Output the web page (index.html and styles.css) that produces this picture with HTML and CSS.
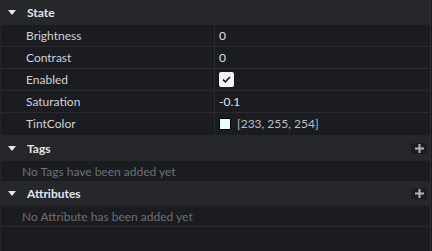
FILE: index.html
```html
<!DOCTYPE html>
<html>
<head>
<meta charset="utf-8">
<link rel="stylesheet" href="styles.css">
</head>
<body>
<div class="panel">
  <div class="section-head">
    <svg class="caret" width="8" height="5" viewBox="0 0 8 5"><path d="M0 0H8L4 5Z" fill="#e6e6e6"/></svg>
    <span class="title">State</span>
  </div>
  <div class="row"><div class="label">Brightness</div><div class="value">0</div></div>
  <div class="row"><div class="label">Contrast</div><div class="value">0</div></div>
  <div class="row"><div class="label">Enabled</div><div class="value"><span class="check"><svg width="9" height="7" viewBox="0 0 9 7"><path d="M1 3.6L3.3 5.8L8 1" fill="none" stroke="#1b1c20" stroke-width="1.6"/></svg></span></div></div>
  <div class="row"><div class="label">Saturation</div><div class="value">-0.1</div></div>
  <div class="row last"><div class="label">TintColor</div><div class="value"><span class="swatch"></span><span class="rgb">[233, 255, 254]</span></div></div>

  <div class="section-head sec2">
    <svg class="caret" width="8" height="5" viewBox="0 0 8 5"><path d="M0 0H8L4 5Z" fill="#e6e6e6"/></svg>
    <span class="title">Tags</span>
    <span class="add"><svg width="9" height="9" viewBox="0 0 9 9"><path d="M4.5 0V9M0 4.5H9" stroke="#b4b6ba" stroke-width="2"/></svg></span>
  </div>
  <div class="empty">No Tags have been added yet</div>
  <div class="section-head">
    <svg class="caret" width="8" height="5" viewBox="0 0 8 5"><path d="M0 0H8L4 5Z" fill="#e6e6e6"/></svg>
    <span class="title">Attributes</span>
    <span class="add"><svg width="9" height="9" viewBox="0 0 9 9"><path d="M4.5 0V9M0 4.5H9" stroke="#b4b6ba" stroke-width="2"/></svg></span>
  </div>
  <div class="empty bottom">No Attribute has been added yet</div>
</div>
</body>
</html>
```
FILE: styles.css
```css
html, body {
  margin: 0;
  padding: 0;
  background: #1b1c20;
}
body {
  width: 432px;
  height: 251px;
  overflow: hidden;
  font-family: Lato, "Liberation Sans", sans-serif;
  font-size: 12px;
  color: #cfd2d8;
}
.panel {
  width: 429px;
  height: 251px;
  border-left: 1px solid #26272c;
  border-right: 1px solid #2c2d32;
  background: #1b1c20;
}
.section-head {
  height: 25px;
  background: #25272b;
  display: flex;
  align-items: center;
  position: relative;
}
.sec2 {
  margin-top: 1px;
  height: 26px;
}
.caret {
  margin-left: 7px;
  margin-right: 11px;
}
.title {
  font-weight: bold;
  color: #e4e5e8;
  font-size: 12px;
}
.add {
  margin-left: auto;
  margin-right: 3px;
  width: 16px;
  height: 11px;
  background: #1c1d21;
  display: flex;
  align-items: center;
  justify-content: center;
}
.row {
  display: grid;
  grid-template-columns: 214px 1fr;
  height: 21px;
  border-bottom: 1px solid #2a2b30;
}
.row.last {
  border-bottom: none;
}
.label {
  padding-left: 25px;
  display: flex;
  align-items: center;
  border-right: 1px solid #2a2b30;
}
.value {
  padding-left: 4px;
  display: flex;
  align-items: center;
  color: #dde3ea;
}
.check {
  width: 15px;
  height: 15px;
  background: #f4f4f4;
  border-radius: 2px;
  display: flex;
  align-items: center;
  justify-content: center;
}
.swatch {
  width: 10px;
  height: 10px;
  background: #e9fffe;
  border: 1px solid #000;
  margin-right: 6px;
}
.rgb {
  color: #b9bec6;
}
.empty {
  height: 20px;
  padding-left: 21px;
  display: flex;
  align-items: center;
  color: #6c7079;
}
.empty.bottom {
  border-bottom: 1px solid #2a2b30;
}
```
